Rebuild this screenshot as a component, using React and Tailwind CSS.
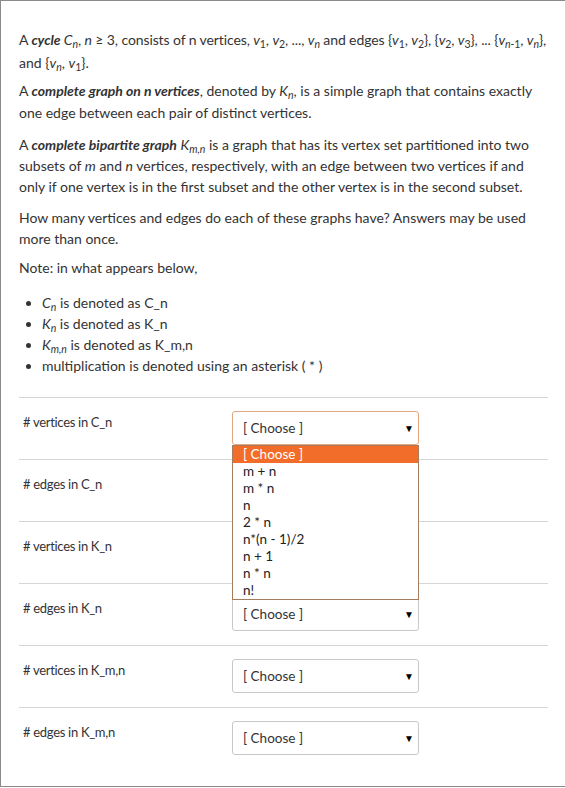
import React from "react";

const options = ["m + n", "m * n", "n", "2 * n", "n*(n - 1)/2", "n + 1", "n * n", "n!"];

function Select({ focused = false, open = false }) {
  return (
    <div className="relative w-[187px] self-start">
      <div
        className={
          "flex h-[34px] items-center justify-between rounded-[3px] border bg-white pl-[10px] pr-[4px] text-[13.5px] text-[#333] " +
          (focused ? "border-[#e3a67d]" : "border-[#c8c8c8]")
        }
      >
        <span>[ Choose ]</span>
        <span className="text-[10px] text-black">▼</span>
      </div>
      {open && (
        <div className="absolute left-0 top-full z-10 w-[187px] border border-[#a57c5c] bg-white text-[13.5px] leading-[17px] text-[#222]">
          <div className="bg-[#f26c2a] pl-[10px] text-white">[ Choose ]</div>
          {options.map((o) => (
            <div key={o} className="pl-[10px]">
              {o}
            </div>
          ))}
        </div>
      )}
    </div>
  );
}

function Row({ label, first = false, open = false }) {
  return (
    <div className="flex h-[62px] border-t border-[#d6d6d6] pt-[13px]">
      <div className="w-[213px] pl-[4px] pt-[1px] text-[13px] leading-[21px] tracking-[-0.3px] text-[#333]">{label}</div>
      <Select focused={first} open={open} />
    </div>
  );
}

export default function App() {
  return (
    <div className="h-[788px] w-[565px] overflow-hidden bg-white">
      <div className="h-[787px] border-b border-l border-t border-[#8a8a8a] font-['Lato',sans-serif] text-[14px] leading-[21px] text-[#333]">
        <div className="pl-[18px] pr-[17px] pt-[27px]">
          <p className="mb-[6px] leading-[23px]">
            <span className="whitespace-nowrap tracking-[-0.1px]">
              A <b><i>cycle</i></b> <i>C<sub>n</sub></i>, <i>n</i> ≥ 3, consists of n vertices, <i>v</i><sub>1</sub>, <i>v</i><sub>2</sub>, ..., <i>v<sub>n</sub></i> and edges {"{"}<i>v</i><sub>1</sub>, <i>v</i><sub>2</sub>{"}"}, {"{"}<i>v</i><sub>2</sub>, <i>v</i><sub>3</sub>{"}"}, ... {"{"}<i>v<sub>n</sub></i><sub>-1</sub>, <i>v<sub>n</sub></i>{"}"},
            </span>
            <br />
            and {"{"}<i>v<sub>n</sub></i>, <i>v</i><sub>1</sub>{"}"}.
          </p>
          <p className="mb-[10px] leading-[22px]">
            A <b><i>complete graph on n vertices</i></b>, denoted by <i>K<sub>n</sub></i>, is a simple graph that contains exactly one edge between each pair of distinct vertices.
          </p>
          <p className="mb-[10px]">
            A <b><i>complete bipartite graph</i></b> <i>K<sub>m,n</sub></i> is a graph that has its vertex set partitioned into two subsets of <i>m</i> and <i>n</i> vertices, respectively, with an edge between two vertices if and only if one vertex is in the first subset and the other vertex is in the second subset.
          </p>
          <p className="mb-[8px]">
            How many vertices and edges do each of these graphs have? Answers may be used more than once.
          </p>
          <p className="mb-[14px]">Note: in what appears below,</p>
          <ul className="mb-[21px] list-disc pl-[23px]">
            <li><i>C<sub>n</sub></i> is denoted as C_n</li>
            <li><i>K<sub>n</sub></i> is denoted as K_n</li>
            <li><i>K<sub>m,n</sub></i> is denoted as K_m,n</li>
            <li>multiplication is denoted using an asterisk ( * )</li>
          </ul>
          <div>
            <Row label="# vertices in C_n" first open />
            <Row label="# edges in C_n" />
            <Row label="# vertices in K_n" />
            <Row label="# edges in K_n" />
            <Row label="# vertices in K_m,n" />
            <Row label="# edges in K_m,n" />
          </div>
        </div>
      </div>
    </div>
  );
}
